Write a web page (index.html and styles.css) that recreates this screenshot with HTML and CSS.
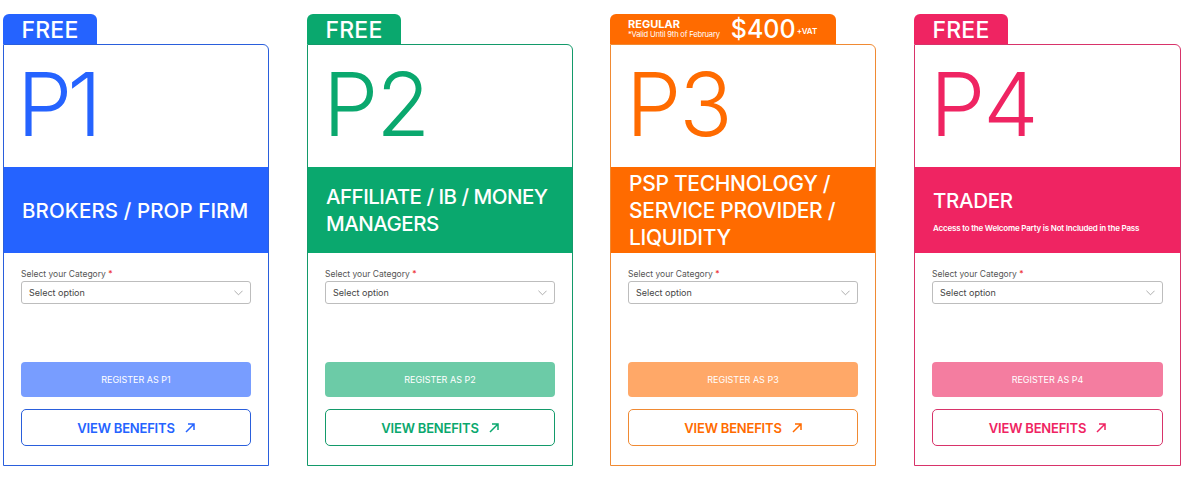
FILE: index.html
```html
<!DOCTYPE html>
<html lang="en">
<head>
<meta charset="utf-8">
<title>Passes</title>
<link rel="stylesheet" href="styles.css">
</head>
<body>
<div class="row">
  <div class="col blue">
    <div class="tab"><span class="free">FREE</span></div>
    <div class="card">
      <div class="top"><span class="code">P1</span></div>
      <div class="band"><h2>BROKERS / PROP FIRM</h2></div>
      <div class="body">
        <label class="lbl">Select your Category <span class="req">*</span></label>
        <div class="select"><span>Select option</span><svg class="chev" viewBox="0 0 10 6" width="9" height="6"><path d="M0.5 0.5 L5 5 L9.5 0.5" fill="none" stroke="#9a9a9a" stroke-width="0.9"/></svg></div>
        <div class="reg">REGISTER AS P1</div>
        <div class="view">VIEW BENEFITS <svg class="arr" viewBox="0 0 10 10" width="10" height="10"><path d="M1 9 L9 1 M3 1 H9 V7" fill="none" stroke="currentColor" stroke-width="1.5"/></svg></div>
      </div>
    </div>
  </div>
  <div class="col green">
    <div class="tab"><span class="free">FREE</span></div>
    <div class="card">
      <div class="top"><span class="code">P2</span></div>
      <div class="band"><h2>AFFILIATE / IB / MONEY MANAGERS</h2></div>
      <div class="body">
        <label class="lbl">Select your Category <span class="req">*</span></label>
        <div class="select"><span>Select option</span><svg class="chev" viewBox="0 0 10 6" width="9" height="6"><path d="M0.5 0.5 L5 5 L9.5 0.5" fill="none" stroke="#9a9a9a" stroke-width="0.9"/></svg></div>
        <div class="reg">REGISTER AS P2</div>
        <div class="view">VIEW BENEFITS <svg class="arr" viewBox="0 0 10 10" width="10" height="10"><path d="M1 9 L9 1 M3 1 H9 V7" fill="none" stroke="currentColor" stroke-width="1.5"/></svg></div>
      </div>
    </div>
  </div>
  <div class="col orange">
    <div class="tab wide">
      <div class="regular">
        <span class="rg">REGULAR</span>
        <span class="valid">*Valid Until 9th of February</span>
      </div>
      <span class="price">$400</span><span class="vat">+VAT</span>
    </div>
    <div class="card">
      <div class="top"><span class="code">P3</span></div>
      <div class="band"><h2>PSP TECHNOLOGY / SERVICE PROVIDER / LIQUIDITY</h2></div>
      <div class="body">
        <label class="lbl">Select your Category <span class="req">*</span></label>
        <div class="select"><span>Select option</span><svg class="chev" viewBox="0 0 10 6" width="9" height="6"><path d="M0.5 0.5 L5 5 L9.5 0.5" fill="none" stroke="#9a9a9a" stroke-width="0.9"/></svg></div>
        <div class="reg">REGISTER AS P3</div>
        <div class="view">VIEW BENEFITS <svg class="arr" viewBox="0 0 10 10" width="10" height="10"><path d="M1 9 L9 1 M3 1 H9 V7" fill="none" stroke="currentColor" stroke-width="1.5"/></svg></div>
      </div>
    </div>
  </div>
  <div class="col pink">
    <div class="tab"><span class="free">FREE</span></div>
    <div class="card">
      <div class="top"><span class="code">P4</span></div>
      <div class="band"><h2>TRADER</h2><p class="note">Access to the Welcome Party is Not Included in the Pass</p></div>
      <div class="body">
        <label class="lbl">Select your Category <span class="req">*</span></label>
        <div class="select"><span>Select option</span><svg class="chev" viewBox="0 0 10 6" width="9" height="6"><path d="M0.5 0.5 L5 5 L9.5 0.5" fill="none" stroke="#9a9a9a" stroke-width="0.9"/></svg></div>
        <div class="reg">REGISTER AS P4</div>
        <div class="view">VIEW BENEFITS <svg class="arr" viewBox="0 0 10 10" width="10" height="10"><path d="M1 9 L9 1 M3 1 H9 V7" fill="none" stroke="currentColor" stroke-width="1.5"/></svg></div>
      </div>
    </div>
  </div>
</div>
</body>
</html>
```

FILE: styles.css
```css
* { box-sizing: border-box; }
html, body { margin: 0; background: #fff; }
body { font-family: "Inter", "Liberation Sans", sans-serif; }

.row {
  display: flex;
  gap: 38px;
  padding: 14px 8px 0 3px;
}
.col { width: 266px; flex: none; display: flex; flex-direction: column; }
.col.green { margin-right: -1px; }
.col.pink { width: 267px; }

.blue { --c: #2563ff; --b: #2a5fdc; --l: #789dff; }
.green { --c: #0aa86e; --b: #139a6a; --l: #6ccba7; }
.orange { --c: #ff6b00; --b: #f08a33; --l: #ffa868; }
.pink { --c: #ef2462; --b: #d8336a; --l: #f47da0; }

.tab {
  width: 94px;
  height: 30px;
  background: var(--c);
  border-radius: 6px 6px 0 0;
  color: #fff;
  display: flex;
  align-items: center;
  justify-content: center;
}
.free { font-size: 23px; font-weight: 500; letter-spacing: 0.2px; line-height: 1; padding-top: 2px; }

.tab.wide { width: 226px; justify-content: flex-start; padding-left: 18px; }
.regular { display: flex; flex-direction: column; line-height: 1; }
.rg { font-size: 11px; font-weight: 700; }
.valid { font-size: 7.6px; letter-spacing: -0.2px; margin-top: 1px; }
.price { font-size: 25px; font-weight: 500; margin-left: 11px; line-height: 1; }
.vat { font-size: 8px; font-weight: 600; align-self: flex-end; margin-bottom: 8px; margin-left: 1px; }

.card {
  height: 422px;
  border: 1px solid var(--b);
  border-radius: 0 6px 0 0;
  display: flex;
  flex-direction: column;
}
.top {
  height: 122px;
  padding: 15px 0 0 15px;
}
.blue .top { padding-left: 13px; }
.code {
  font-size: 88px;
  font-weight: 300;
  color: var(--c);
  line-height: 1;
  letter-spacing: -2px;
}
.blue .code { letter-spacing: -5px; }
.band {
  height: 86px;
  background: var(--c);
  color: #fff;
  display: flex;
  flex-direction: column;
  justify-content: center;
  padding: 0 6px 0 18px;
}
.band h2 {
  margin: 0;
  font-size: 20.5px;
  font-weight: 500;
  line-height: 27px;
  letter-spacing: -0.3px;
}
.blue .band h2 { letter-spacing: 0.1px; }
.green .band h2 { font-size: 20.5px; letter-spacing: -0.5px; }
.orange .band h2 { font-size: 21px; }
.note { margin: 9px 0 0; font-size: 8px; font-weight: 600; letter-spacing: -0.2px; }

.body {
  display: flex;
  flex-direction: column;
  padding: 15px 17px 0 17px;
}
.lbl { font-size: 8.5px; color: #555; line-height: 12px; }
.req { color: #e33; }
.select {
  margin-top: 1px;
  height: 23px;
  border: 1px solid #bdbdbd;
  border-radius: 3px;
  display: flex;
  align-items: center;
  justify-content: space-between;
  padding: 0 7px 0 7px;
  font-size: 9px;
  color: #444;
}
.reg {
  margin-top: 58px;
  height: 35px;
  border-radius: 4px;
  background: var(--l);
  color: #fff;
  font-size: 9px;
  display: flex;
  align-items: center;
  justify-content: center;
}
.view {
  margin-top: 12px;
  height: 37px;
  border: 1px solid var(--b);
  border-radius: 5px;
  color: var(--c);
  font-size: 13px;
  font-weight: 600;
  letter-spacing: -0.2px;
  display: flex;
  align-items: center;
  justify-content: center;
  gap: 10px;
}
.arr { margin-top: 1px; }
```
